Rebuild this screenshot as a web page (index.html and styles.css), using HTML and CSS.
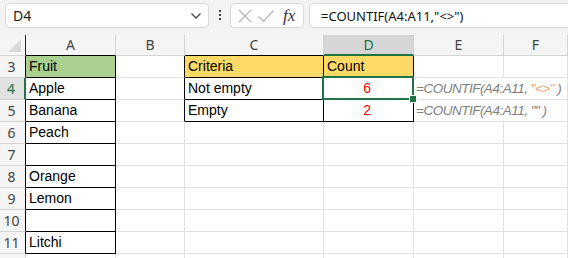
FILE: index.html
```html
<!DOCTYPE html>
<html lang="en">
<head>
  <meta charset="UTF-8">
  <title>COUNTIF not empty</title>
  <link rel="stylesheet" href="styles.css">
</head>
<body>
  <div class="toolbar">
    <div class="name-box">
      <span>D4</span>
      <svg class="chevron" width="12" height="8" viewBox="0 0 12 8"><path d="M1.5 1.5 L6 6 L10.5 1.5" fill="none" stroke="#444" stroke-width="1.3"/></svg>
    </div>
    <div class="dots"><i></i><i></i><i></i></div>
    <div class="fx-box">
      <svg width="16" height="16" viewBox="0 0 16 16"><path d="M2 2 L14 14 M14 2 L2 14" stroke="#b4b4b4" stroke-width="1.2" fill="none"/></svg>
      <svg width="18" height="16" viewBox="0 0 18 16"><path d="M1.5 8.5 L6.5 13.5 L16.5 2.5" stroke="#b4b4b4" stroke-width="1.2" fill="none"/></svg>
      <span class="fx">fx</span>
    </div>
    <div class="formula">=COUNTIF(A4:A11,"&lt;&gt;")</div>
  </div>

  <div class="sheet">
    <div class="corner"><span class="tri"></span></div>
    <div class="col-head">A</div>
    <div class="col-head">B</div>
    <div class="col-head">C</div>
    <div class="col-head active">D</div>
    <div class="col-head">E</div>
    <div class="col-head">F</div>

    <div class="row-head edge">3</div>
    <div class="cell fruit head">Fruit</div>
    <div class="cell edge"></div>
    <div class="cell crit head">Criteria</div>
    <div class="cell crit head last">Count</div>
    <div class="cell"></div>
    <div class="cell"></div>

    <div class="row-head active">4</div>
    <div class="cell fruit">Apple</div>
    <div class="cell edge"></div>
    <div class="cell crit">Not empty</div>
    <div class="cell crit last num selected">6</div>
    <div class="cell note wide">=COUNTIF(A4:A11, <span class="str">"&lt;&gt;"</span> )</div>

    <div class="row-head edge">5</div>
    <div class="cell fruit">Banana</div>
    <div class="cell edge"></div>
    <div class="cell crit bottom">Empty</div>
    <div class="cell crit last bottom num">2</div>
    <div class="cell note wide">=COUNTIF(A4:A11, "" )</div>

    <div class="row-head edge">6</div>
    <div class="cell fruit">Peach</div>
    <div class="cell"></div><div class="cell"></div><div class="cell"></div><div class="cell"></div><div class="cell"></div>

    <div class="row-head edge">7</div>
    <div class="cell fruit"></div>
    <div class="cell"></div><div class="cell"></div><div class="cell"></div><div class="cell"></div><div class="cell"></div>

    <div class="row-head edge">8</div>
    <div class="cell fruit">Orange</div>
    <div class="cell"></div><div class="cell"></div><div class="cell"></div><div class="cell"></div><div class="cell"></div>

    <div class="row-head edge">9</div>
    <div class="cell fruit">Lemon</div>
    <div class="cell"></div><div class="cell"></div><div class="cell"></div><div class="cell"></div><div class="cell"></div>

    <div class="row-head edge">10</div>
    <div class="cell fruit"></div>
    <div class="cell"></div><div class="cell"></div><div class="cell"></div><div class="cell"></div><div class="cell"></div>

    <div class="row-head edge">11</div>
    <div class="cell fruit">Litchi</div>
    <div class="cell"></div><div class="cell"></div><div class="cell"></div><div class="cell"></div><div class="cell"></div>

    <div class="row-head"></div>
    <div class="cell"></div>
    <div class="cell"></div><div class="cell"></div><div class="cell"></div><div class="cell"></div><div class="cell"></div>
  </div>
</body>
</html>
```

FILE: styles.css
```css
body {
  margin: 0;
  width: 568px;
  height: 258px;
  overflow: hidden;
  background: #ffffff;
  font-family: 'Liberation Sans', Arial, sans-serif;
}

/* formula bar */
.toolbar {
  height: 35px;
  background: #f3f3f3;
  display: flex;
  align-items: flex-start;
  padding-top: 3px;
  box-sizing: border-box;
}
.name-box, .fx-box, .formula {
  height: 25px;
  box-sizing: border-box;
  background: #ffffff;
  border: 1px solid #d9d9d9;
  border-radius: 4px;
  display: flex;
  align-items: center;
}
.name-box {
  width: 204px;
  margin-left: 5px;
  padding: 0 6px 0 7px;
  justify-content: space-between;
  font-family: 'Noto Sans', sans-serif;
  font-size: 14px;
  color: #222;
}
.dots {
  width: 21px;
  display: flex;
  flex-direction: column;
  align-items: center;
  gap: 2px;
  padding-top: 7px;
}
.dots i {
  width: 2px;
  height: 2px;
  background: #444;
  display: block;
}
.fx-box {
  width: 74px;
  padding: 0 4px 0 6px;
  gap: 4px;
}
.fx {
  font-family: 'Liberation Serif', serif;
  font-style: italic;
  font-size: 17px;
  color: #333;
  margin-left: 4px;
}
.formula {
  flex: 1;
  margin-left: 5px;
  margin-right: -6px;
  padding-left: 11px;
  font-family: 'Noto Sans', sans-serif;
  font-size: 13px;
  color: #111;
}

/* sheet grid */
.sheet {
  display: grid;
  grid-template-columns: 26px 90px 69px 139px 90px 90px 1fr;
  grid-template-rows: 21px;
  grid-auto-rows: 22px;
}
.corner, .col-head, .row-head {
  background: #f5f5f5;
  box-sizing: border-box;
  border-right: 1px solid #d4d4d4;
  border-bottom: 1px solid #d4d4d4;
  font-family: 'Noto Sans', sans-serif;
  font-size: 14px;
  color: #444;
}
.corner {
  position: relative;
  border-right-color: #222;
}
.tri {
  position: absolute;
  right: 4px;
  bottom: 3px;
  width: 0;
  height: 0;
  border-left: 13px solid transparent;
  border-bottom: 13px solid #dadada;
}
.col-head {
  text-align: center;
  line-height: 20px;
}
.col-head:nth-child(2),
.col-head:nth-child(4),
.col-head:nth-child(5) {
  border-bottom-color: #000;
}
.col-head.active {
  background: #d6d6d6;
  color: #217346;
  border-bottom: 2px solid #217346;
  line-height: 19px;
}
.row-head {
  text-align: center;
  line-height: 21px;
  padding-right: 2px;
}
.row-head.edge {
  border-right-color: #000;
}
.row-head.active {
  background: #e2e2e2;
  color: #217346;
  border-right: 2px solid #217346;
}

.cell {
  box-sizing: border-box;
  border-right: 1px solid #e1e1e1;
  border-bottom: 1px solid #e1e1e1;
  font-size: 14px;
  line-height: 21px;
  padding: 0 3px;
  white-space: nowrap;
  color: #000;
}
.cell.fruit {
  border-right-color: #000;
  border-bottom-color: #000;
}
.cell.edge {
  border-right-color: #000;
}
.cell.head.fruit {
  background: #a9d08e;
}
.cell.crit.head {
  background: #ffd966;
}
.cell.crit {
  border-bottom-color: #000;
  border-right-color: #000;
}
.cell.num {
  text-align: right;
  padding-right: 42px;
  color: #ff0000;
}
.cell.selected {
  position: relative;
}
.cell.selected::after {
  content: "";
  position: absolute;
  left: -2px;
  top: -2px;
  right: -1px;
  bottom: -1px;
  border: 2px solid #217346;
}
.cell.selected::before {
  content: "";
  position: absolute;
  right: -4px;
  bottom: -4px;
  width: 6px;
  height: 6px;
  background: #217346;
  border: 1px solid #fff;
  z-index: 1;
}
.cell.wide {
  grid-column: span 2;
}
.cell.note {
  font-style: italic;
  font-size: 13.5px;
  letter-spacing: -0.5px;
  color: #7f7f7f;
  padding-left: 2px;
  border-bottom-color: #e1e1e1;
}
.str {
  color: #f4a26b;
}
```
